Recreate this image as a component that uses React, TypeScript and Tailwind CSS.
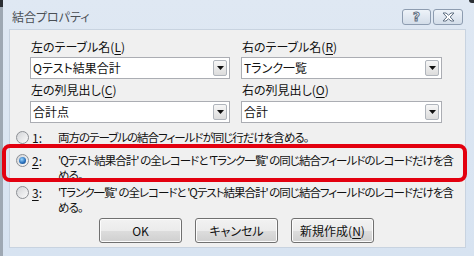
import React from "react";

const jp = "font-['Noto_Sans_CJK_JP',sans-serif] [font-feature-settings:'palt'] text-[12px] text-[#111]";
const opt = "text-[11.5px] tracking-[-1px] whitespace-nowrap";

function U({ children }: { children: React.ReactNode }) {
  return <span className="underline underline-offset-[2px]">{children}</span>;
}

function Combo({ value }: { value: string }) {
  return (
    <div className="h-[22px] bg-white border border-[#abadb3] flex items-center pl-[2px] pr-[2px]">
      <span className="flex-1 leading-[16px]">{value}</span>
      <div className="w-[14px] h-[16px] rounded-[2px] border border-[#b0b5bc] bg-gradient-to-b from-[#f7f7f7] to-[#dcdcdc] flex items-center justify-center">
        <svg width="7" height="4" viewBox="0 0 7 4">
          <path d="M0 0h7L3.5 4z" fill="#111" />
        </svg>
      </div>
    </div>
  );
}

function Radio({ checked }: { checked?: boolean }) {
  return (
    <div className="mt-[1px] w-[13px] h-[13px] shrink-0 rounded-full border border-[#8c8f94] bg-gradient-to-br from-[#d2d4d7] to-[#fbfbfb] flex items-center justify-center">
      {checked && (
        <div className="w-[7px] h-[7px] rounded-full bg-[radial-gradient(circle_at_40%_35%,#9ad6ff,#2a71bd_55%,#0f3d75)]" />
      )}
    </div>
  );
}

function Btn({ children }: { children: React.ReactNode }) {
  return (
    <div className="w-[83px] h-[25px] rounded-[3px] border border-[#707070] bg-[linear-gradient(#f2f2f2_0%,#ebebeb_50%,#dddddd_51%,#cfcfcf_100%)] shadow-[inset_0_0_0_1px_#fcfcfc] flex items-center justify-center leading-[16px] whitespace-nowrap">
      {children}
    </div>
  );
}

export default function App() {
  return (
    <div className={`relative w-[474px] h-[256px] overflow-hidden flex bg-gradient-to-b from-[#dfe8f3] to-[#d7e3f1] ${jp}`}>
      <div className="w-[3px] flex flex-col">
        <div className="h-[7px] bg-[#2b2f33]" />
        <div className="flex-1 bg-[#9ea8b3]" />
      </div>

      <div className="flex-1 flex flex-col">
        {/* title bar */}
        <div className="h-[29px] flex items-start pt-[9px] pl-[9px] pr-[11px]">
          <span className="flex-1 leading-[16px] text-[#4a4f55]">結合プロパティ</span>
          <div className="flex gap-[2px]">
            <div className="w-[29px] h-[16px] rounded-[3px] border border-[#8d9cb0] bg-gradient-to-b from-[#eef3f9] to-[#d3dde9] flex items-center justify-center">
              <span className="font-['DejaVu_Sans',sans-serif] font-bold text-[12px] leading-[12px] text-white [-webkit-text-stroke:1px_#5f6f82]">?</span>
            </div>
            <div className="w-[30px] h-[16px] rounded-[3px] border border-[#8d9cb0] bg-gradient-to-b from-[#eef3f9] to-[#d3dde9] flex items-center justify-center">
              <svg width="13" height="10" viewBox="0 0 13 10">
                <path
                  d="M1 1h3l2.5 2.2L9 1h3L8.2 5 12 9H9L6.5 6.8 4 9H1l3.8-4z"
                  fill="#fff"
                  stroke="#5f6f82"
                  strokeWidth="1"
                  strokeLinejoin="round"
                />
              </svg>
            </div>
          </div>
        </div>

        {/* client area */}
        <div className="flex-1 ml-[6px] mr-[8px] mb-[8px] bg-[#f0f0f0] border border-[#c8d3e0] pt-[9px] flex flex-col">
          <div className="flex gap-[11px] pl-[20px]">
            <div className="w-[200px] flex flex-col">
              <div className="h-[16px] leading-[16px] pl-[1px]">左のテーブル名(<U>L</U>)</div>
              <div className="mt-[2px]"><Combo value="Qテスト結果合計" /></div>
              <div className="mt-[3px] h-[16px] leading-[16px] pl-[1px]">左の列見出し(<U>C</U>)</div>
              <div className="mt-[3px]"><Combo value="合計点" /></div>
            </div>
            <div className="w-[201px] flex flex-col">
              <div className="h-[16px] leading-[16px] pl-[1px]">右のテーブル名(<U>R</U>)</div>
              <div className="mt-[2px]"><Combo value="Tランク一覧" /></div>
              <div className="mt-[3px] h-[16px] leading-[16px] pl-[1px]">右の列見出し(<U>O</U>)</div>
              <div className="mt-[3px]"><Combo value="合計" /></div>
            </div>
          </div>

          <div className="mt-[7px] flex items-start pl-[6px] leading-[15px]">
            <Radio />
            <span className="ml-[3px] w-[26px]"><U>1</U>:</span>
            <div className={opt}>両方のテーブルの結合フィールドが同じ行だけを含める。</div>
          </div>

          <div className="mt-[8px] flex items-start pl-[6px] leading-[15px]">
            <Radio checked />
            <span className="ml-[3px] w-[26px]"><U>2</U>:</span>
            <div className={opt}>
              <div>'Qテスト結果合計' の全レコードと 'Tランク一覧' の同じ結合フィールドのレコードだけを含</div>
              <div>める。</div>
            </div>
          </div>

          <div className="mt-[2px] flex items-start pl-[6px] leading-[15px]">
            <Radio />
            <span className="ml-[3px] w-[26px]"><U>3</U>:</span>
            <div className={opt}>
              <div>'Tランク一覧' の全レコードと 'Qテスト結果合計' の同じ結合フィールドのレコードだけを含</div>
              <div>める。</div>
            </div>
          </div>

          <div className="mt-[3px] flex gap-[13px] pl-[89px]">
            <Btn>OK</Btn>
            <Btn>キャンセル</Btn>
            <Btn>新規作成(<U>N</U>)</Btn>
          </div>
        </div>
      </div>

      {/* red highlight annotation */}
      <div className="absolute left-[2px] top-[144px] w-[465px] h-[38px] rounded-[8px] border-[4px] border-[#e3000f] pointer-events-none" />
      <div className="absolute right-0 top-0 w-[5px] h-[3px] rounded-bl-[3px] bg-[#2b2f33]" />
    </div>
  );
}
